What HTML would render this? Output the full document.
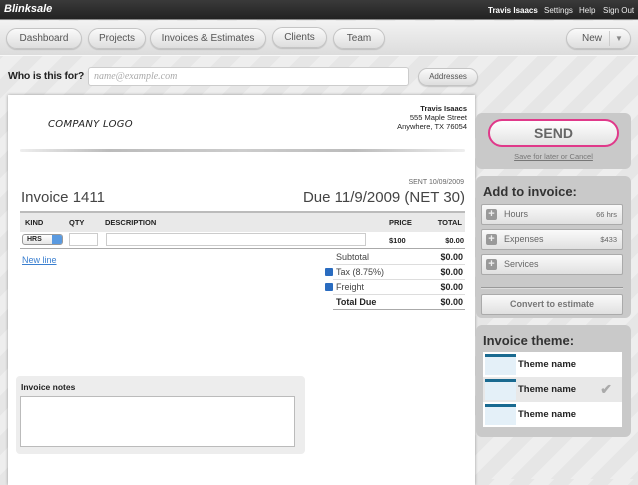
<!DOCTYPE html>
<html><head><meta charset="utf-8"><style>
*{box-sizing:border-box;margin:0;padding:0}
body{width:638px;height:479px;overflow:hidden;position:relative;font-family:"Liberation Sans",Arial,sans-serif;color:#222;
background:repeating-linear-gradient(135deg,#e6e6e6 0 14px,#eeeeee 14px 28px);}
.abs{position:absolute}
#top{left:0;top:0;width:638px;height:20px;background:linear-gradient(#3a3a3a,#222);border-bottom:1px solid #888}
#nav{left:0;top:21px;width:638px;height:35px;background:linear-gradient(#f2f2f2,#dcdcdc);border-bottom:1px solid #f8f8f8}
.pill{position:absolute;height:21px;border-radius:11px;background:linear-gradient(#fafafa,#dedede);border:1px solid #c4c4c4;font-size:10px;color:#555;text-align:center;line-height:19px;box-shadow:0 1px 1px rgba(0,0,0,.15)}
#paper{left:8px;top:95px;width:467px;height:390px;background:#fff;box-shadow:0 0 3px rgba(0,0,0,.35)}
.r{position:absolute;text-align:right}
.panel{position:absolute;background:#c9c9c9;border-radius:6px}
.btn{position:absolute;left:5px;width:142px;height:21px;border:1px solid #aaa;border-radius:2px;background:linear-gradient(#fafafa,#e0e0e0);font-size:9px;color:#666;line-height:19px}
.plus{position:absolute;left:4px;top:4px;width:11px;height:11px;background:#999;border-radius:2px;color:#eee;font-size:11px;line-height:10px;text-align:center;font-weight:bold}
.trow{position:absolute;left:0;width:139px;height:25px;font-size:9.5px;font-weight:bold;line-height:25px}
.thumb{position:absolute;left:2px;top:2px;width:31px;height:21px;background:#e4f0f8;border-top:3px solid #1a6a90}
.sum{position:absolute;left:333px;width:132px;height:15px;border-bottom:1px solid #ddd;font-size:9px;line-height:15px}
</style></head><body>
<div id="top" class="abs">
<div class="abs" style="left:4px;top:3px;color:#fff;font-weight:bold;font-style:italic;font-size:11px">Blinksale</div>
<div class="abs" style="left:488px;top:6px;color:#fff;font-size:8px;font-weight:bold">Travis Isaacs</div>
<div class="abs" style="left:544px;top:6px;color:#eee;font-size:8px">Settings</div>
<div class="abs" style="left:579px;top:6px;color:#eee;font-size:8px">Help</div>
<div class="abs" style="left:603px;top:6px;color:#eee;font-size:8px">Sign Out</div>
</div>
<div id="nav" class="abs"></div>
<div class="pill" style="left:6px;top:28px;width:76px">Dashboard</div>
<div class="pill" style="left:88px;top:28px;width:58px">Projects</div>
<div class="pill" style="left:150px;top:28px;width:116px">Invoices &amp; Estimates</div>
<div class="pill" style="left:272px;top:27px;width:55px">Clients</div>
<div class="pill" style="left:333px;top:28px;width:52px">Team</div>
<div class="pill" style="left:566px;top:28px;width:65px;text-align:left;padding-left:15px">New<span style="position:absolute;left:42px;top:2px;height:15px;border-left:1px solid #ccc"></span><span style="position:absolute;left:48px;font-size:8px;color:#888">▼</span></div>
<div class="abs" style="left:8px;top:70px;font-size:10.5px;font-weight:bold;letter-spacing:-.2px">Who is this for?</div>
<div class="abs" style="left:88px;top:67px;width:321px;height:19px;background:#fff;border:1px solid #ccc;border-radius:3px;font-family:'Liberation Serif',serif;font-style:italic;color:#aaa;font-size:10px;padding:3px 5px">name@example.com</div>
<div class="pill" style="left:418px;top:68px;width:60px;height:18px;line-height:16px;font-size:8px">Addresses</div>

<div id="paper" class="abs"></div>
<div class="abs" style="left:48px;top:119px;font-size:10px;font-family:'DejaVu Sans',sans-serif;font-style:italic;letter-spacing:.3px">COMPANY LOGO</div>
<div class="r" style="left:360px;top:104px;width:107px;font-size:7.5px;line-height:9px"><b>Travis Isaacs</b><br>555 Maple Street<br>Anywhere, TX 76054</div>
<div class="abs" style="left:20px;top:149px;width:445px;height:3px;background:linear-gradient(90deg,#eee,#bbb 20%,#ccc 50%,#bbb 75%,#eee);border-radius:2px"></div>
<div class="r" style="left:360px;top:179px;width:104px;font-size:7px;color:#666">SENT 10/09/2009</div>
<div class="abs" style="left:21px;top:189px;font-size:15px;color:#444">Invoice 1411</div>
<div class="r" style="left:260px;top:189px;width:205px;font-size:15px;color:#444">Due 11/9/2009 (NET 30)</div>
<div class="abs" style="left:20px;top:211px;width:445px;height:21px;background:#e9e9e9;border-top:2px solid #bbb;font-size:7.5px;font-weight:bold;line-height:19px">
<span class="abs" style="left:5px">KIND</span><span class="abs" style="left:49px">QTY</span><span class="abs" style="left:85px">DESCRIPTION</span><span class="abs" style="left:369px">PRICE</span><span class="abs" style="right:3px">TOTAL</span></div>
<div class="abs" style="left:22px;top:234px;width:41px;height:11px;border:1px solid #999;border-radius:3px;background:linear-gradient(#fff,#e6e6e6);font-size:7px;font-weight:bold;padding-left:4px;line-height:9px">HRS<span class="abs" style="right:0;top:0;width:10px;height:9px;background:#5a9ae0;border-radius:0 2px 2px 0"></span></div>
<div class="abs" style="left:69px;top:233px;width:29px;height:13px;border:1px solid #ccc"></div>
<div class="abs" style="left:106px;top:233px;width:260px;height:13px;border:1px solid #ccc"></div>
<div class="abs" style="left:389px;top:236px;font-size:7.5px;font-weight:bold">$100</div>
<div class="r" style="left:420px;top:236px;width:44px;font-size:7.5px;font-weight:bold">$0.00</div>
<div class="abs" style="left:20px;top:248px;width:445px;border-top:1px solid #aaa"></div>
<div class="abs" style="left:22px;top:255px;font-size:9px;color:#3a7fd0;text-decoration:underline">New line</div>
<div class="sum" style="top:250px"><span style="padding-left:3px;color:#444">Subtotal</span><b style="position:absolute;right:2px">$0.00</b></div>
<div class="sum" style="top:265px"><span class="abs" style="left:-8px;top:3px;width:8px;height:8px;background:#2a6cc0;border-radius:1px"></span><span style="padding-left:3px;color:#444">Tax (8.75%)</span><b style="position:absolute;right:2px">$0.00</b></div>
<div class="sum" style="top:280px"><span class="abs" style="left:-8px;top:3px;width:8px;height:8px;background:#2a6cc0;border-radius:1px"></span><span style="padding-left:3px;color:#444">Freight</span><b style="position:absolute;right:2px">$0.00</b></div>
<div class="sum" style="top:295px;border-bottom:1px solid #aaa"><b style="padding-left:3px">Total Due</b><b style="position:absolute;right:2px">$0.00</b></div>
<div class="abs" style="left:16px;top:376px;width:289px;height:78px;background:#ededed;border-radius:4px"></div>
<div class="abs" style="left:21px;top:382px;font-size:8.5px;font-weight:bold">Invoice notes</div>
<div class="abs" style="left:20px;top:396px;width:275px;height:51px;background:#fff;border:1px solid #bbb"></div>

<div class="panel" style="left:476px;top:113px;width:155px;height:56px"></div>
<div class="abs" style="left:488px;top:119px;width:131px;height:28px;border:2px solid #e0398a;border-radius:14px;background:linear-gradient(#fff,#e2e2e2);text-align:center;font-size:14px;font-weight:bold;color:#666;line-height:24px">SEND</div>
<div class="abs" style="left:476px;top:152px;width:155px;text-align:center;font-size:7.5px;color:#777;text-decoration:underline">Save for later or Cancel</div>

<div class="panel" style="left:476px;top:176px;width:155px;height:142px">
<div class="abs" style="left:7px;top:8px;font-size:13px;font-weight:bold;color:#333">Add to invoice:</div>
<div class="btn" style="top:28px"><span class="plus">+</span><span style="position:absolute;left:22px">Hours</span><span style="position:absolute;right:5px;font-size:7.5px">66 hrs</span></div>
<div class="btn" style="top:53px"><span class="plus">+</span><span style="position:absolute;left:22px">Expenses</span><span style="position:absolute;right:5px;font-size:7.5px">$433</span></div>
<div class="btn" style="top:78px"><span class="plus">+</span><span style="position:absolute;left:22px">Services</span></div>
<div class="abs" style="left:5px;top:111px;width:142px;border-top:1px solid #999;border-bottom:1px solid #ddd"></div>
<div class="btn" style="top:118px;text-align:center;font-weight:bold;color:#777">Convert to estimate</div>
</div>

<div class="panel" style="left:476px;top:325px;width:155px;height:112px">
<div class="abs" style="left:7px;top:8px;font-size:13px;font-weight:bold;color:#333">Invoice theme:</div>
<div class="abs" style="left:7px;top:27px;width:139px;height:75px;background:#fff">
<div class="trow" style="top:0"><span class="thumb"></span><span style="position:absolute;left:35px">Theme name</span></div>
<div class="trow" style="top:25px;background:#e8e8e8"><span class="thumb"></span><span style="position:absolute;left:35px">Theme name</span><span style="position:absolute;right:10px;color:#aaa;font-size:14px">✔</span></div>
<div class="trow" style="top:50px"><span class="thumb"></span><span style="position:absolute;left:35px">Theme name</span></div>
</div>
</div>
</body></html>
